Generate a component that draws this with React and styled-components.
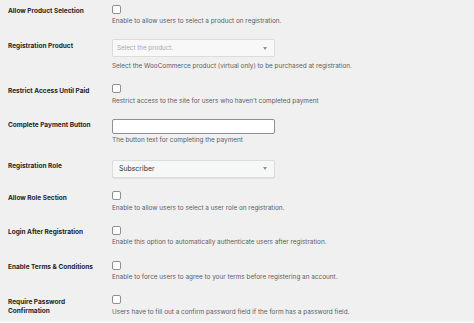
import styled, { createGlobalStyle } from 'styled-components';

const GlobalStyle = createGlobalStyle`
  html, body {
    margin: 0;
    padding: 0;
    background: #f0f0f1;
  }
  body {
    font-family: Inter, "Liberation Sans", Arial, sans-serif;
    overflow: hidden;
  }
`;

const settings = [
  {
    label: 'Allow Product Selection',
    type: 'checkbox',
    desc: 'Enable to allow users to select a product on registration.',
  },
  {
    label: 'Registration Product',
    type: 'select',
    placeholder: 'Select the product.',
    desc: 'Select the WooCommerce product (virtual only) to be purchased at registration.',
  },
  {
    label: 'Restrict Access Until Paid',
    type: 'checkbox',
    desc: 'Restrict access to the site for users who haven’t completed payment',
  },
  {
    label: 'Complete Payment Button',
    type: 'text',
    desc: 'The button text for completing the payment',
  },
  {
    label: 'Registration Role',
    type: 'select',
    value: 'Subscriber',
  },
  {
    label: 'Allow Role Section',
    type: 'checkbox',
    desc: 'Enable to allow users to select a user role on registration.',
  },
  {
    label: 'Login After Registration',
    type: 'checkbox',
    desc: 'Enable this option to automatically authenticate users after registration.',
  },
  {
    label: 'Enable Terms & Conditions',
    type: 'checkbox',
    desc: 'Enable to force users to agree to your terms before registering an account.',
  },
  {
    label: 'Require Password Confirmation',
    type: 'checkbox',
    desc: 'Users have to fill out a confirm password field if the form has a password field.',
  },
];

// gap between the control and its help text, per control type
const descGap = { checkbox: '3.5px', select: '4.5px', text: '2px' };
// bottom padding of the field cell, per control type
const cellBottom = { checkbox: '4.3px', select: '4.3px', text: '5.7px' };

const Arrow = () => (
  <svg width="4" height="3" viewBox="0 0 4 3">
    <polygon points="0,0 4,0 2,3" fill="#8c8f94" />
  </svg>
);

const Field = ({ item }) => {
  if (item.type === 'checkbox') return <Checkbox type="checkbox" />;
  if (item.type === 'text') return <TextInput type="text" />;
  return (
    <SelectBox $placeholder={!item.value}>
      <span>{item.value || item.placeholder}</span>
      <Arrow />
    </SelectBox>
  );
};

const App = () => {
  return (
    <Page>
      <GlobalStyle />
      <FormTable>
        {settings.map((item) => (
          <Row key={item.label}>
            <Label>{item.label}</Label>
            <Cell $bottom={cellBottom[item.type]}>
              <Field item={item} />
              {item.desc && (
                <Description $gap={descGap[item.type]}>{item.desc}</Description>
              )}
            </Cell>
          </Row>
        ))}
      </FormTable>
      <BottomEdge />
    </Page>
  );
};

const Page = styled.div`
  height: 323px;
  display: flex;
  flex-direction: column;
  overflow: hidden;
`;

const FormTable = styled.div`
  flex: 1;
  min-height: 0;
  overflow: hidden;
  display: flex;
  flex-direction: column;
  padding-left: 8px;
  & > :first-child {
    margin-top: -4px;
  }
`;

const Row = styled.div`
  display: flex;
  align-items: flex-start;
  flex-shrink: 0;
`;

const Label = styled.div`
  width: 96px;
  flex-shrink: 0;
  padding: 11px 8px 11px 0;
  font-size: 6.5px;
  line-height: 9.5px;
  font-weight: 700;
  color: #1d2327;
`;

const Cell = styled.div`
  display: flex;
  flex-direction: column;
  align-items: flex-start;
  padding: 8.5px 0 ${(p) => p.$bottom};
`;

const Checkbox = styled.input`
  appearance: none;
  margin: 0;
  width: 9px;
  height: 9px;
  box-sizing: border-box;
  border: 1px solid #8c8f94;
  border-radius: 2px;
  background: #fff;
`;

const TextInput = styled.input`
  margin: 0;
  width: 163px;
  height: 15px;
  box-sizing: border-box;
  border: 1px solid #8c8f94;
  border-radius: 2px;
  background: #fff;
`;

const SelectBox = styled.div`
  width: 163px;
  height: 18px;
  box-sizing: border-box;
  display: flex;
  align-items: center;
  justify-content: space-between;
  padding: ${(p) => (p.$placeholder ? '0 7.5px 0 4px' : '0 7.5px 0 6px')};
  border: 1px solid #dcdcde;
  border-radius: 2px;
  background: ${(p) => (p.$placeholder ? '#f8f8f8' : '#f6f7f7')};
  box-shadow: ${(p) => (p.$placeholder ? 'none' : '0 1px 1px rgb(0 0 0 / 6%)')};
  font-size: ${(p) => (p.$placeholder ? '6.25px' : '6.9px')};
  color: ${(p) => (p.$placeholder ? '#a7aaad' : '#2c3338')};
`;

const Description = styled.p`
  margin: ${(p) => p.$gap} 0 0;
  font-size: 6.4px;
  line-height: 9.5px;
  color: #5a5f65;
  white-space: nowrap;
`;

const BottomEdge = styled.div`
  height: 2px;
  flex-shrink: 0;
  background: #fafafa;
`;

export default App;
